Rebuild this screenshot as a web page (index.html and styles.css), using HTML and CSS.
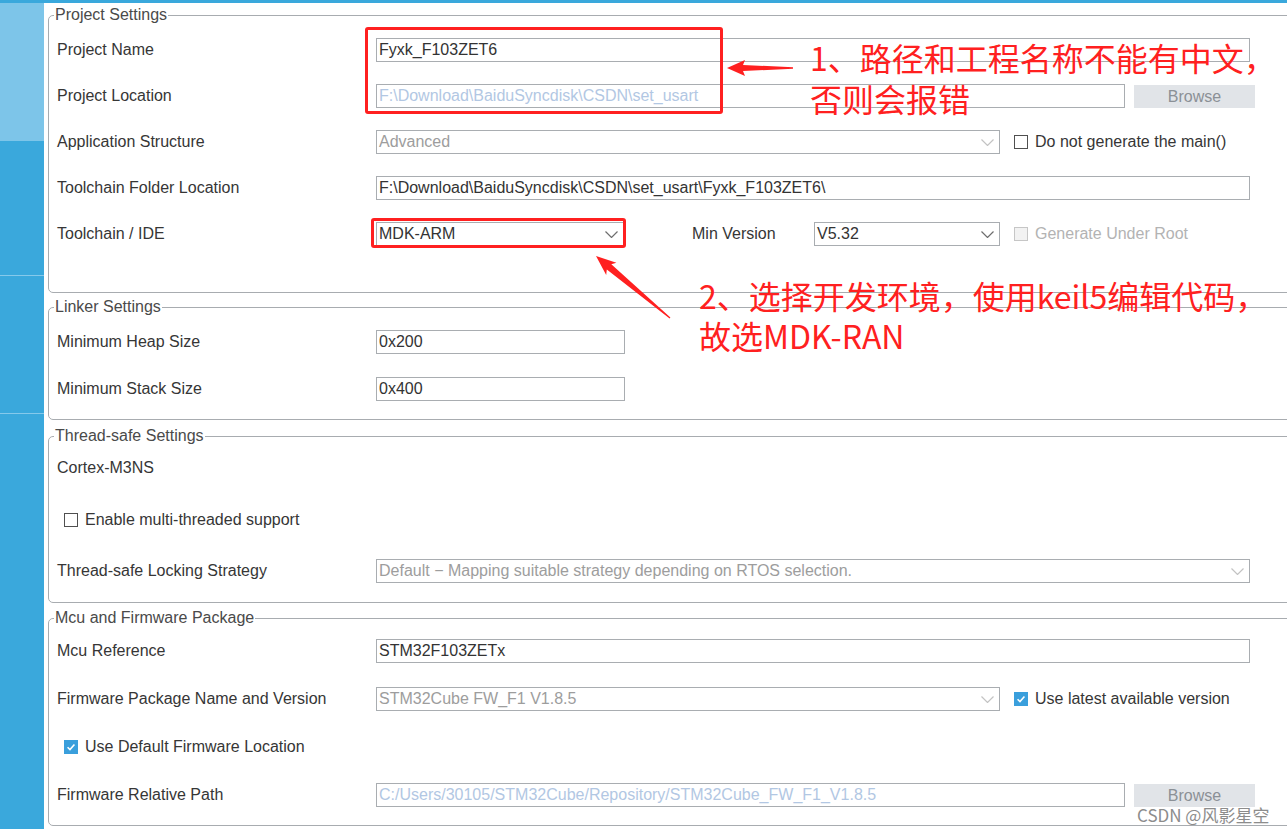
FILE: index.html
```html
<!DOCTYPE html>
<html lang="en">
    <head>
        <meta charset="UTF-8">
        <title>Project Manager - Project Settings</title>
        <link rel="stylesheet" href="styles.css">
    </head>
    <body>
        <div class="topbar"></div>
        <div class="main">
            <aside class="sidebar">
                <div class="side-tab side-tab-active"></div>
                <div class="side-tab side-tab-a"></div>
                <div class="side-tab side-tab-b"></div>
            </aside>

            <div class="content">
                <fieldset class="group group-project">
                    <legend>Project Settings</legend>
                    <div class="row">
                        <span class="label">Project Name</span>
                        <div class="field w-full">Fyxk_F103ZET6</div>
                    </div>
                    <div class="row">
                        <span class="label">Project Location</span>
                        <div class="field w-path muted-path">F:\Download\BaiduSyncdisk\CSDN\set_usart</div>
                        <div class="button">Browse</div>
                    </div>
                    <div class="row">
                        <span class="label">Application Structure</span>
                        <div class="field select w-select disabled">
                            <span>Advanced</span>
                            <svg class="chevron" viewBox="0 0 13 7"><polyline points="0.5,0.5 6.5,6.5 12.5,0.5"/></svg>
                        </div>
                        <span class="check side-check"></span>
                        <span class="check-label">Do not generate the main()</span>
                    </div>
                    <div class="row">
                        <span class="label">Toolchain Folder Location</span>
                        <div class="field w-full">F:\Download\BaiduSyncdisk\CSDN\set_usart\Fyxk_F103ZET6\</div>
                    </div>
                    <div class="row">
                        <span class="label">Toolchain / IDE</span>
                        <div class="field select w-short">
                            <span>MDK-ARM</span>
                            <svg class="chevron" viewBox="0 0 13 7"><polyline points="0.5,0.5 6.5,6.5 12.5,0.5"/></svg>
                        </div>
                        <span class="label-inline">Min Version</span>
                        <div class="field select w-version">
                            <span>V5.32</span>
                            <svg class="chevron" viewBox="0 0 13 7"><polyline points="0.5,0.5 6.5,6.5 12.5,0.5"/></svg>
                        </div>
                        <span class="check check-disabled side-check"></span>
                        <span class="check-label label-disabled">Generate Under Root</span>
                    </div>
                </fieldset>

                <fieldset class="group group-linker">
                    <legend>Linker Settings</legend>
                    <div class="row row-47">
                        <span class="label">Minimum Heap Size</span>
                        <div class="field w-linker">0x200</div>
                    </div>
                    <div class="row row-47">
                        <span class="label">Minimum Stack Size</span>
                        <div class="field w-linker">0x400</div>
                    </div>
                </fieldset>

                <fieldset class="group group-thread">
                    <legend>Thread-safe Settings</legend>
                    <div class="row">
                        <span class="label">Cortex-M3NS</span>
                    </div>
                    <div class="row row-check row-58">
                        <span class="check"></span>
                        <span class="check-label">Enable multi-threaded support</span>
                    </div>
                    <div class="row row-44">
                        <span class="label">Thread-safe Locking Strategy</span>
                        <div class="field select w-full disabled">
                            <span>Default &minus; Mapping suitable strategy depending on RTOS selection.</span>
                            <svg class="chevron" viewBox="0 0 13 7"><polyline points="0.5,0.5 6.5,6.5 12.5,0.5"/></svg>
                        </div>
                    </div>
                </fieldset>

                <fieldset class="group group-mcu">
                    <legend>Mcu and Firmware Package</legend>
                    <div class="row row-48">
                        <span class="label">Mcu Reference</span>
                        <div class="field w-full">STM32F103ZETx</div>
                    </div>
                    <div class="row row-48">
                        <span class="label">Firmware Package Name and Version</span>
                        <div class="field select w-select disabled">
                            <span>STM32Cube FW_F1 V1.8.5</span>
                            <svg class="chevron" viewBox="0 0 13 7"><polyline points="0.5,0.5 6.5,6.5 12.5,0.5"/></svg>
                        </div>
                        <span class="check check-on side-check">
                            <svg viewBox="0 0 14 14"><polyline points="3,7.2 5.8,10 11,4"/></svg>
                        </span>
                        <span class="check-label">Use latest available version</span>
                    </div>
                    <div class="row row-48 row-check">
                        <span class="check check-on">
                            <svg viewBox="0 0 14 14"><polyline points="3,7.2 5.8,10 11,4"/></svg>
                        </span>
                        <span class="check-label">Use Default Firmware Location</span>
                    </div>
                    <div class="row row-48">
                        <span class="label">Firmware Relative Path</span>
                        <div class="field w-path muted-path">C:/Users/30105/STM32Cube/Repository/STM32Cube_FW_F1_V1.8.5</div>
                        <div class="button">Browse</div>
                    </div>
                </fieldset>
            </div>
        </div>

        <!-- red annotations drawn over the screenshot -->
        <div class="mark mark-name"></div>
        <div class="mark mark-ide"></div>
        <svg class="arrows" width="1287" height="834" viewBox="0 0 1287 834">
            <polygon points="727,68 745,60 743,65 793,67.3 793,68.7 743,71 745,76"/>
            <polygon points="596,256 616.4,262.7 611.3,264.2 670.4,317.5 669.6,318.5 606.8,269.6 606.2,274.9"/>
        </svg>
        <div class="note note-1">1、路径和工程名称不能有中文，<br>否则会报错</div>
        <div class="note note-2">2、选择开发环境，使用keil5编辑代码，<br>故选MDK-RAN</div>
        <div class="watermark">CSDN @风影星空</div>
    </body>
</html>
```

FILE: styles.css
```css
body {
    margin: 0;
    width: 1287px;
    height: 834px;
    overflow: hidden;
    position: relative;
    font-family: "Liberation Sans", Arial, sans-serif;
    font-size: 16px;
    color: #363636;
    background-color: #fff;
}
.topbar {
    height: 3px;
    background-color: #3aa8dc;
}
.main {
    display: flex;
    align-items: flex-start;
}

/* left tab strip */
.sidebar {
    flex: none;
    width: 44px;
    height: 826px;
    background-color: #3aa8dc;
    display: flex;
    flex-direction: column;
}
.side-tab-active {
    height: 138px;
    background-color: #7dc5e9;
}
.side-tab-a {
    height: 134px;
    border-bottom: 1px solid #86c9eb;
}
.side-tab-b {
    height: 137px;
    border-bottom: 1px solid #86c9eb;
}

.content {
    flex: none;
    width: 1300px;
    padding-left: 4px;
}
.group {
    margin: 5px 0 0;
    padding: 0 0 7px 5px;
    border: 1px solid #a8acb0;
    border-radius: 5px;
    min-width: 0;
}
.group legend {
    padding: 0 1px;
    line-height: 18px;
    color: #4a4a4a;
}
.group-project {
    margin-top: 3px;
    padding-top: 3px;
    padding-bottom: 35px;
}
.group-linker {
    padding-top: 2px;
}
.group-thread {
    margin-top: 7px;
    padding-bottom: 9px;
}
.group-mcu {
    margin-top: 6px;
    padding-bottom: 6px;
}

.row {
    display: flex;
    align-items: center;
    height: 46px;
    padding-left: 3px;
}
.row-44 { height: 44px; }
.row-47 { height: 47px; }
.row-48 { height: 48px; }
.row-58 { height: 58px; }
.row-check {
    padding-left: 10px;
}
.label {
    flex: none;
    width: 319px;
}
.label-inline {
    flex: none;
    width: 122px;
    margin-left: 68px;
}

.field {
    flex: none;
    box-sizing: border-box;
    height: 24px;
    padding: 0 5px 0 2px;
    border: 1px solid #a9adb1;
    background-color: #fff;
    display: flex;
    align-items: center;
    justify-content: space-between;
    white-space: nowrap;
    overflow: hidden;
    color: #333;
}
.w-full { width: 874px; }
.w-path { width: 749px; }
.w-select { width: 624px; }
.w-short { width: 248px; }
.w-version { width: 186px; }
.w-linker { width: 249px; }
.muted-path {
    color: #b2c7e3;
}
.disabled {
    color: #9d9d9d;
}
.chevron {
    flex: none;
    width: 13px;
    height: 7px;
    fill: none;
    stroke: #6e6e6e;
    stroke-width: 1.2;
}
.disabled .chevron {
    stroke: #c3c3c3;
}

.button {
    flex: none;
    width: 121px;
    height: 23px;
    margin-left: 9px;
    background-color: #e1e4e8;
    color: #8b9096;
    text-align: center;
    line-height: 23px;
}

.check {
    flex: none;
    box-sizing: border-box;
    width: 14px;
    height: 14px;
    border: 1px solid #505050;
    background-color: #fff;
}
.side-check {
    margin-left: 14px;
}
.check-on {
    border-color: #3a9fdc;
    background-color: #3a9fdc;
}
.check-on svg {
    display: block;
    width: 12px;
    height: 12px;
    fill: none;
    stroke: #fff;
    stroke-width: 1.8;
}
.check-disabled {
    border-color: #c6c6c6;
    background-color: #f2f2f2;
}
.check-label {
    margin-left: 7px;
    white-space: nowrap;
}
.label-disabled {
    color: #b3b3b3;
}

/* annotations */
.mark {
    position: absolute;
    border: 3px solid #ff2020;
    border-radius: 3px;
}
.mark-name {
    left: 365px;
    top: 27px;
    width: 352px;
    height: 81px;
}
.mark-ide {
    left: 371px;
    top: 218px;
    width: 249px;
    height: 24px;
}
.arrows {
    position: absolute;
    left: 0;
    top: 0;
    fill: #ff2020;
}
.note {
    position: absolute;
    font-family: "Noto Sans CJK SC", sans-serif;
    font-size: 32px;
    color: #ff2020;
    white-space: nowrap;
}
.note-1 {
    left: 810px;
    top: 37px;
    line-height: 41px;
}
.note-2 {
    left: 699px;
    top: 275px;
    line-height: 40px;
}
.watermark {
    position: absolute;
    left: 1137px;
    top: 804px;
    font-family: "Noto Sans CJK SC", sans-serif;
    font-size: 17px;
    line-height: 22px;
    color: #8c8c8c;
}
```
